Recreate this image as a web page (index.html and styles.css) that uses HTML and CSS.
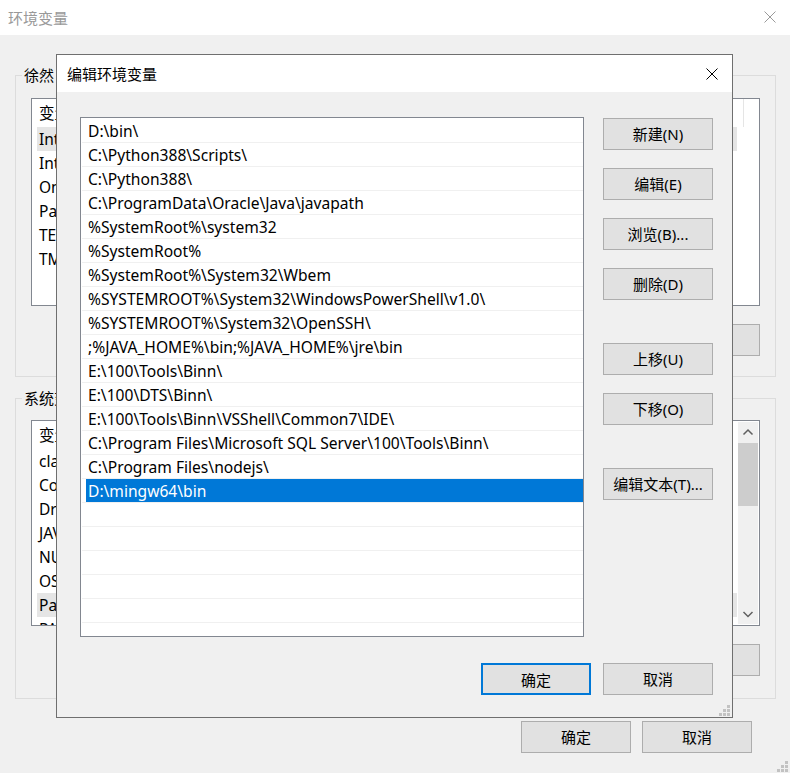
FILE: index.html
```html
<!DOCTYPE html>
<html lang="zh-CN">
<head>
<meta charset="utf-8">
<title>环境变量</title>
<link rel="stylesheet" href="styles.css">
</head>
<body>
<div class="win">
  <div class="win-title">
    <span>环境变量</span>
    <svg class="x-icon x-gray" viewBox="0 0 12 12"><path d="M0.5 0.5 L11.5 11.5 M11.5 0.5 L0.5 11.5"/></svg>
  </div>
  <div class="win-body">
    <fieldset class="group">
      <legend>徐然 的用户变量(U)</legend>
      <div class="lv lv-user">
        <div class="lv-head"><span class="c1">变量</span><span class="c2">值</span></div>
        <div class="lv-row sel"><span class="c1">IntelliJ IDEA</span><span class="c2">D:\IntelliJ IDEA\bin;</span></div>
        <div class="lv-row"><span class="c1">IntelliJ IDEA Community Edition</span><span class="c2">D:\IDEA\bin;</span></div>
        <div class="lv-row"><span class="c1">OneDrive</span><span class="c2">C:\Users\徐然\OneDrive</span></div>
        <div class="lv-row"><span class="c1">Path</span><span class="c2">D:\bin\;C:\Python388\Scripts\;C:\Python388\</span></div>
        <div class="lv-row"><span class="c1">TEMP</span><span class="c2">%USERPROFILE%\AppData\Local\Temp</span></div>
        <div class="lv-row"><span class="c1">TMP</span><span class="c2">%USERPROFILE%\AppData\Local\Temp</span></div>
      </div>
      <div class="grp-btns">
        <button class="btn">新建(N)...</button>
        <button class="btn">编辑(E)...</button>
        <button class="btn">删除(D)</button>
      </div>
    </fieldset>

    <fieldset class="group group-sys">
      <legend>系统变量(S)</legend>
      <div class="lv lv-sys">
        <div class="lv-content">
          <div class="lv-head"><span class="c1">变量</span><span class="c2">值</span></div>
          <div class="lv-row"><span class="c1">classpath</span><span class="c2">.;%JAVA_HOME%\lib\dt.jar;%JAVA_HOME%\lib\tools.jar;</span></div>
          <div class="lv-row"><span class="c1">ComSpec</span><span class="c2">%SystemRoot%\system32\cmd.exe</span></div>
          <div class="lv-row"><span class="c1">DriverData</span><span class="c2">C:\Windows\System32\Drivers\DriverData</span></div>
          <div class="lv-row"><span class="c1">JAVA_HOME</span><span class="c2">C:\Program Files\Java\jdk1.8.0</span></div>
          <div class="lv-row"><span class="c1">NUMBER_OF_PROCESSORS</span><span class="c2">8</span></div>
          <div class="lv-row"><span class="c1">OS</span><span class="c2">Windows_NT</span></div>
          <div class="lv-row sel"><span class="c1">Path</span><span class="c2">D:\bin\;C:\Python388\Scripts\;C:\Python388\</span></div>
          <div class="lv-row"><span class="c1">PATHEXT</span><span class="c2">.COM;.EXE;.BAT;.CMD;.VBS;.VBE;.JS</span></div>
        </div>
        <div class="scrollbar">
          <div class="sb-btn"><svg viewBox="0 0 20 20"><path d="M5.5 12.5 L10 8 L14.5 12.5"/></svg></div>
          <div class="sb-thumb"></div>
          <div class="sb-track"></div>
          <div class="sb-btn"><svg viewBox="0 0 20 20"><path d="M5.5 8 L10 12.5 L14.5 8"/></svg></div>
        </div>
      </div>
      <div class="grp-btns">
        <button class="btn">新建(W)...</button>
        <button class="btn">编辑(I)...</button>
        <button class="btn">删除(L)</button>
      </div>
    </fieldset>

    <div class="win-footer">
      <button class="btn">确定</button>
      <button class="btn">取消</button>
    </div>
  </div>
  <svg class="grip grip-win" viewBox="0 0 11 11"><path d="M8 0h3v3H8zM4 4h3v3H4zM8 4h3v3H8zM0 8h3v3H0zM4 8h3v3H4zM8 8h3v3H8z"/></svg>
</div>

<div class="dlg">
  <div class="dlg-title">
    <span>编辑环境变量</span>
    <svg class="x-icon x-black" viewBox="0 0 12 12"><path d="M0.5 0.5 L11.5 11.5 M11.5 0.5 L0.5 11.5"/></svg>
  </div>
  <div class="dlg-body">
    <div class="dlg-main">
      <div class="dlg-list">
        <div class="dlg-row"><span class="dlg-cell">D:\bin\</span></div>
        <div class="dlg-row"><span class="dlg-cell">C:\Python388\Scripts\</span></div>
        <div class="dlg-row"><span class="dlg-cell">C:\Python388\</span></div>
        <div class="dlg-row"><span class="dlg-cell">C:\ProgramData\Oracle\Java\javapath</span></div>
        <div class="dlg-row"><span class="dlg-cell">%SystemRoot%\system32</span></div>
        <div class="dlg-row"><span class="dlg-cell">%SystemRoot%</span></div>
        <div class="dlg-row"><span class="dlg-cell">%SystemRoot%\System32\Wbem</span></div>
        <div class="dlg-row"><span class="dlg-cell">%SYSTEMROOT%\System32\WindowsPowerShell\v1.0\</span></div>
        <div class="dlg-row"><span class="dlg-cell">%SYSTEMROOT%\System32\OpenSSH\</span></div>
        <div class="dlg-row"><span class="dlg-cell">;%JAVA_HOME%\bin;%JAVA_HOME%\jre\bin</span></div>
        <div class="dlg-row"><span class="dlg-cell">E:\100\Tools\Binn\</span></div>
        <div class="dlg-row"><span class="dlg-cell">E:\100\DTS\Binn\</span></div>
        <div class="dlg-row"><span class="dlg-cell">E:\100\Tools\Binn\VSShell\Common7\IDE\</span></div>
        <div class="dlg-row"><span class="dlg-cell">C:\Program Files\Microsoft SQL Server\100\Tools\Binn\</span></div>
        <div class="dlg-row"><span class="dlg-cell">C:\Program Files\nodejs\</span></div>
        <div class="dlg-row selected"><span class="dlg-cell">D:\mingw64\bin</span></div>
        <div class="dlg-row"><span class="dlg-cell"></span></div>
        <div class="dlg-row"><span class="dlg-cell"></span></div>
        <div class="dlg-row"><span class="dlg-cell"></span></div>
        <div class="dlg-row"><span class="dlg-cell"></span></div>
        <div class="dlg-row"><span class="dlg-cell"></span></div>
      </div>
      <div class="dlg-btns">
        <button class="btn">新建(N)</button>
        <button class="btn">编辑(E)</button>
        <button class="btn">浏览(B)...</button>
        <button class="btn">删除(D)</button>
        <button class="btn btn-sep">上移(U)</button>
        <button class="btn">下移(O)</button>
        <button class="btn btn-sep">编辑文本(T)...</button>
      </div>
    </div>
    <div class="dlg-footer">
      <button class="btn btn-default">确定</button>
      <button class="btn">取消</button>
    </div>
  </div>
  <svg class="grip grip-dlg" viewBox="0 0 11 11"><path d="M8 0h3v3H8zM4 4h3v3H4zM8 4h3v3H8zM0 8h3v3H0zM4 8h3v3H4zM8 8h3v3H8z"/></svg>
</div>
</body>
</html>
```

FILE: styles.css
```css
* {
  box-sizing: border-box;
}

html, body {
  margin: 0;
  padding: 0;
}

body {
  width: 790px;
  height: 773px;
  overflow: hidden;
  background: #f0f0f0;
  font-family: "Noto Sans", "Noto Sans CJK SC", sans-serif;
  font-size: 15px;
  color: #000;
  position: relative;
}

/* ---------- background window ---------- */
.win {
  position: relative;
  height: 773px;
}

.win-title {
  height: 35px;
  background: #fff;
  display: flex;
  align-items: center;
  justify-content: space-between;
  padding: 0 14px 1px 8px;
  color: #999;
}

.x-icon {
  width: 12px;
  height: 12px;
  fill: none;
  stroke-width: 1;
}

.x-gray {
  stroke: #9a9a9a;
}

.x-black {
  stroke: #000;
}

.win-body {
  padding: 30px 14px 0 15px;
}

.group {
  margin: 0;
  padding: 13px 15px 20px 15px;
  border: 1px solid #dcdcdc;
  min-width: 0;
}

.group legend {
  padding: 0 2px;
  margin-left: -9px;
  line-height: 20px;
  height: 20px;
  color: #000;
}

.group-sys {
  margin-top: 11px;
  padding-top: 12px;
  padding-bottom: 22px;
}

.lv {
  border: 1px solid #828790;
  background: #fff;
  overflow: hidden;
  font-size: 15.5px;
}

.lv-user {
  height: 208px;
}

.lv-sys {
  height: 206px;
  display: flex;
}

.lv-content {
  flex: 1;
  overflow: hidden;
}

.lv-head {
  height: 28px;
  line-height: 28px;
  display: grid;
  grid-template-columns: 200px 505px;
  padding-left: 7px;
  white-space: nowrap;
}

.lv-head .c2 {
  border-right: 1px solid #e5e5e5;
  padding-left: 8px;
}

.lv-row {
  height: 24px;
  line-height: 24px;
  width: 700px;
  margin-left: 5px;
  padding-left: 2px;
  display: grid;
  grid-template-columns: 200px 498px;
  white-space: nowrap;
  overflow: hidden;
}

.lv-row .c2 {
  padding-left: 8px;
  overflow: hidden;
}

.lv-row.sel {
  background: #e5e5e5;
}

.scrollbar {
  width: 20px;
  margin: 1px 1px 1px 0;
  background: #f0f0f0;
  display: flex;
  flex-direction: column;
}

.sb-btn {
  height: 20px;
}

.sb-btn svg {
  width: 20px;
  height: 20px;
  display: block;
  fill: none;
  stroke: #606060;
  stroke-width: 1.5;
}

.sb-thumb {
  height: 63px;
  margin-top: 1px;
  background: #cdcdcd;
}

.sb-track {
  flex: 1;
}

.grp-btns {
  display: flex;
  justify-content: flex-end;
  gap: 11px;
  margin-top: 18px;
}

.win-footer {
  display: flex;
  justify-content: flex-end;
  gap: 11px;
  margin-top: 22px;
  margin-right: 24px;
}

.btn {
  width: 110px;
  height: 32px;
  padding: 0;
  margin: 0;
  background: #e1e1e1;
  border: 1px solid #adadad;
  font-family: inherit;
  font-size: 15px;
  color: #000;
  line-height: 30px;
}

.btn-default {
  border: 2px solid #0078d7;
}

.grip {
  position: absolute;
  width: 11px;
  height: 11px;
  fill: #c2c2c2;
}

.grip-win {
  right: 2px;
  bottom: 1px;
}

/* ---------- edit dialog ---------- */
.dlg {
  position: absolute;
  left: 56px;
  top: 54px;
  width: 677px;
  height: 664px;
  background: #f0f0f0;
  border: 1px solid #6f6f6f;
}

.dlg-title {
  height: 37px;
  background: #fff;
  display: flex;
  align-items: center;
  justify-content: space-between;
  padding: 0 14px 0 10px;
}

.dlg-body {
  padding: 25px 19px 22px 23px;
}

.dlg-main {
  display: flex;
  gap: 19px;
}

.dlg-list {
  width: 504px;
  height: 520px;
  border: 1px solid #828790;
  background: #fff;
  padding: 1px 0 0 1px;
  overflow: hidden;
  font-size: 15.6px;
}

.dlg-row {
  height: 24px;
  border-bottom: 1px solid #f0f0f0;
  display: flex;
}

.dlg-cell {
  flex: 1;
  margin-left: 4px;
  padding-left: 2px;
  line-height: 24px;
  white-space: nowrap;
}

.dlg-row.selected .dlg-cell {
  background: #0078d7;
  color: #fff;
}

.dlg-btns {
  display: flex;
  flex-direction: column;
  gap: 18px;
  padding-top: 1px;
}

.dlg-btns .btn-sep {
  margin-top: 25px;
}

.dlg-footer {
  display: flex;
  justify-content: flex-end;
  gap: 12px;
  margin-top: 26px;
}

.grip-dlg {
  right: 2px;
  bottom: 1px;
}
```
